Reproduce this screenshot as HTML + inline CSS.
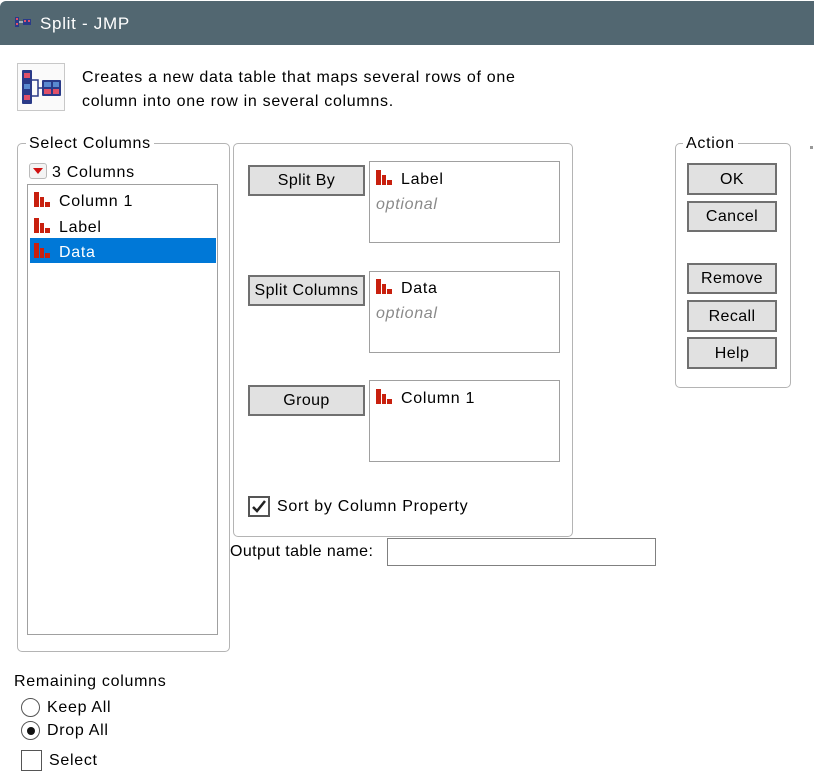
<!DOCTYPE html>
<html><head><meta charset="utf-8"><style>
*{box-sizing:border-box;margin:0;padding:0}
body{width:814px;height:769px;overflow:hidden;background:#fff;position:relative;font-family:"Liberation Sans",sans-serif;font-size:16px;color:#000;letter-spacing:0.7px}
.a{position:absolute;white-space:nowrap}
.grp{position:absolute;border:1px solid #b4b4b4;border-radius:5px}
.leg{position:absolute;background:#fff;padding:0 3px;font-size:16px}
.btn{position:absolute;background:#e1e1e1;border:2px solid #707070;text-align:center;font-size:16px;letter-spacing:0.4px}
.box{position:absolute;border:1px solid #a0a0a0;background:#fff}
.ic{display:inline-block;width:16px;height:15px;vertical-align:-1px;margin-right:9px;position:relative}
.ic i{position:absolute;bottom:0;background:#c8200e}
.opt{color:#8a8a8a;font-style:italic}
</style></head><body>
<div class="a" style="left:0;top:1px;width:814px;height:44px;background:#526771;border-radius:6px 0 0 0"></div>
<svg class="a" style="left:15px;top:17px" width="16" height="10"><rect x="0" y="0" width="4" height="10" fill="#2a3a88"/><rect x="1" y="1" width="2" height="2" fill="#e0506a"/><rect x="1" y="6" width="2" height="2" fill="#e0506a"/><rect x="8" y="2" width="8" height="6" fill="#2a3a88"/><rect x="9" y="3" width="2" height="2" fill="#e0506a"/><rect x="13" y="3" width="2" height="2" fill="#e0506a"/><path d="M4 5H8" stroke="#fff"/></svg>
<div class="a" style="left:40px;top:14px;color:#fff;font-size:17px">Split - JMP</div>

<div class="a" style="left:17px;top:63px;width:48px;height:48px;border:1px solid #c8c8c8;background:#fafafa"></div>
<svg class="a" style="left:22px;top:70px" width="40" height="34"><rect x="0" y="0" width="10" height="34" rx="1" fill="#2a3a88"/><rect x="2" y="3" width="6" height="5" fill="#e05068"/><rect x="2" y="14" width="6" height="5" fill="#5a8ad0"/><rect x="2" y="25" width="6" height="5" fill="#e05068"/><path d="M10 10H16V26H10M16 18H20" stroke="#2a3a88" stroke-width="1.5" fill="none"/><rect x="20" y="10" width="19" height="16" rx="1" fill="#2a3a88"/><rect x="22" y="12" width="7" height="5" fill="#5a8ad0"/><rect x="31" y="12" width="6" height="5" fill="#5a8ad0"/><rect x="22" y="19" width="7" height="5" fill="#e05068"/><rect x="31" y="19" width="6" height="5" fill="#e05068"/></svg>
<div class="a" style="left:82px;top:66px;font-size:16px;line-height:24px">Creates a new data table that maps several rows of one<br>column into one row in several columns.</div>

<div class="grp" style="left:17px;top:143px;width:213px;height:509px"></div>
<div class="leg" style="left:26px;top:135px">Select Columns</div>
<div class="a" style="left:29px;top:163px;width:18px;height:16px;border:1px solid #bbb;border-radius:3px;background:#f4f4f4"></div>
<div class="a" style="left:33px;top:168px;width:0;height:0;border-left:5px solid transparent;border-right:5px solid transparent;border-top:6px solid #d01010"></div>
<div class="a" style="left:52px;top:164px;font-size:16px">3 Columns</div>
<div class="box" style="left:27px;top:184px;width:191px;height:451px"></div>
<div class="a" style="left:30px;top:238px;width:186px;height:25px;background:#0078d7"></div>
<div class="a" style="left:34px;top:192px;font-size:16px"><span class="ic"><i style="left:0;width:5px;height:15px"></i><i style="left:6px;width:4px;height:10px"></i><i style="left:11px;width:5px;height:5px"></i></span>Column 1</div>
<div class="a" style="left:34px;top:218px;font-size:16px"><span class="ic"><i style="left:0;width:5px;height:15px"></i><i style="left:6px;width:4px;height:10px"></i><i style="left:11px;width:5px;height:5px"></i></span>Label</div>
<div class="a" style="left:34px;top:243px;font-size:16px;color:#fff"><span class="ic"><i style="left:0;width:5px;height:15px"></i><i style="left:6px;width:4px;height:10px"></i><i style="left:11px;width:5px;height:5px"></i></span>Data</div>

<div class="grp" style="left:233px;top:143px;width:340px;height:394px"></div>
<div class="btn" style="left:248px;top:165px;width:117px;height:31px;line-height:28px">Split By</div>
<div class="btn" style="left:248px;top:275px;width:117px;height:31px;line-height:28px">Split Columns</div>
<div class="btn" style="left:248px;top:385px;width:117px;height:31px;line-height:28px">Group</div>
<div class="box" style="left:369px;top:161px;width:191px;height:82px"></div>
<div class="box" style="left:369px;top:271px;width:191px;height:82px"></div>
<div class="box" style="left:369px;top:380px;width:191px;height:82px"></div>
<div class="a" style="left:376px;top:170px;font-size:16px"><span class="ic"><i style="left:0;width:5px;height:15px"></i><i style="left:6px;width:4px;height:10px"></i><i style="left:11px;width:5px;height:5px"></i></span>Label</div>
<div class="a opt" style="left:376px;top:196px;font-size:16px">optional</div>
<div class="a" style="left:376px;top:279px;font-size:16px"><span class="ic"><i style="left:0;width:5px;height:15px"></i><i style="left:6px;width:4px;height:10px"></i><i style="left:11px;width:5px;height:5px"></i></span>Data</div>
<div class="a opt" style="left:376px;top:305px;font-size:16px">optional</div>
<div class="a" style="left:376px;top:389px;font-size:16px"><span class="ic"><i style="left:0;width:5px;height:15px"></i><i style="left:6px;width:4px;height:10px"></i><i style="left:11px;width:5px;height:5px"></i></span>Column 1</div>
<div class="a" style="left:248px;top:496px;width:22px;height:21px;border:2px solid #555;background:#fff"></div>
<svg class="a" style="left:251px;top:499px" width="16" height="15"><path d="M2 8L6 12L14 2" stroke="#222" stroke-width="2.5" fill="none"/></svg>
<div class="a" style="left:277px;top:498px;font-size:16px">Sort by Column Property</div>
<div class="a" style="left:230px;top:543px;font-size:16px;letter-spacing:0.4px">Output table name:</div>
<div class="a" style="left:387px;top:538px;width:269px;height:28px;border:1px solid #808080"></div>

<div class="grp" style="left:675px;top:143px;width:116px;height:245px"></div>
<div class="leg" style="left:683px;top:135px">Action</div>
<div class="btn" style="left:687px;top:163px;width:90px;height:32px;line-height:29px">OK</div>
<div class="btn" style="left:687px;top:201px;width:90px;height:31px;line-height:28px">Cancel</div>
<div class="btn" style="left:687px;top:263px;width:90px;height:31px;line-height:28px">Remove</div>
<div class="btn" style="left:687px;top:300px;width:90px;height:32px;line-height:29px">Recall</div>
<div class="btn" style="left:687px;top:337px;width:90px;height:32px;line-height:29px">Help</div>
<div class="a" style="left:810px;top:146px;width:3px;height:3px;background:#999"></div>

<div class="a" style="left:14px;top:673px;font-size:16px">Remaining columns</div>
<div class="a" style="left:21px;top:698px;width:19px;height:19px;border:1.5px solid #555;border-radius:50%"></div>
<div class="a" style="left:47px;top:699px;font-size:16px">Keep All</div>
<div class="a" style="left:21px;top:721px;width:19px;height:19px;border:1.5px solid #555;border-radius:50%"></div>
<div class="a" style="left:26.5px;top:726.5px;width:8px;height:8px;background:#111;border-radius:50%"></div>
<div class="a" style="left:47px;top:722px;font-size:16px">Drop All</div>
<div class="a" style="left:21px;top:750px;width:21px;height:21px;border:1.5px solid #555"></div>
<div class="a" style="left:49px;top:752px;font-size:16px">Select</div>
</body></html>
